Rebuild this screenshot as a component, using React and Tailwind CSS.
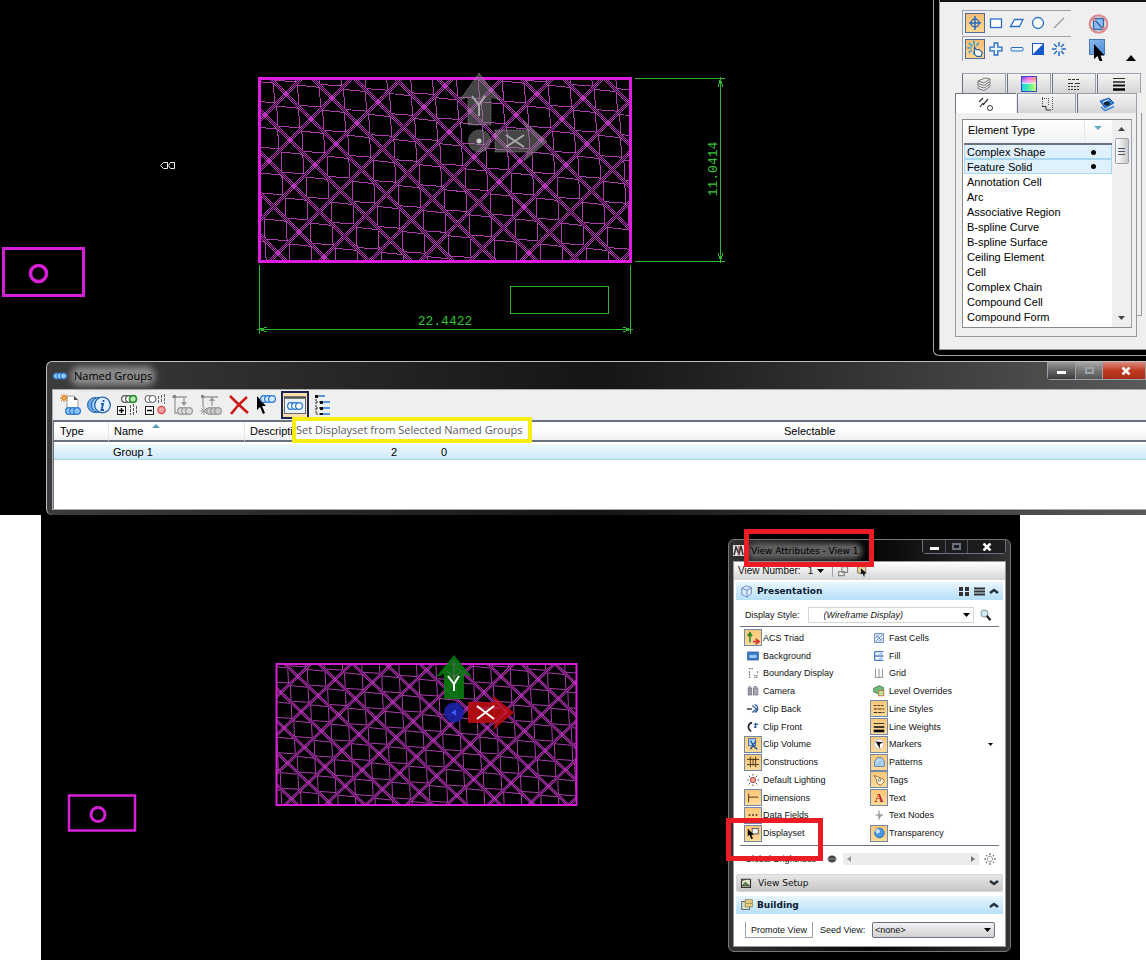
import React from "react";

const ELEMENTS = [
  "Complex Shape", "Feature Solid", "Annotation Cell", "Arc", "Associative Region", "B-spline Curve",
  "B-spline Surface", "Ceiling Element", "Cell", "Complex Chain", "Compound Cell", "Compound Form",
];

// Hatch built on two families of diagonals, with a slightly turned square in every cell.
function hatchPaths() {
  const ux = 25.1, uy = 25.1, vx = -20.9, vy = 20.9;
  const ox = 27, oy = 16;
  let bands = "";
  let cores = "";
  let cells = "";
  for (let i = -14; i <= 14; i++) {
    const fall = Math.round(oy - ox + i * (vy - vx));
    const rise = Math.round(oy + ox + i * (uy + ux));
    for (const d of [-2, 0, 2]) {
      const pair = `M-20 ${fall + d - 20}L400 ${fall + d + 400}M-20 ${rise + d + 20}L400 ${rise + d - 400}`;
      if (d === 0) cores += pair;
      bands += pair;
    }
  }
  for (let i = -20; i <= 20; i++) {
    for (let j = -20; j <= 20; j++) {
      const cx = ox + (i + 0.5) * ux + (j + 0.5) * vx;
      const cy = oy + (i + 0.5) * uy + (j + 0.5) * vy;
      if (cx < -20 || cx > 392 || cy < -20 || cy > 204) continue;
      cells += `M${cx - 11.3} ${cy - 11}L${cx + 10.5} ${cy - 8.7}L${cx + 11.5} ${cy + 10.8}L${cx - 10.5} ${cy + 9.2}Z`;
    }
  }
  return { bands, cores, cells };
}
const HATCH = hatchPaths();

function Hatch({ x, y, w, h }) {
  return (
    <svg x={x} y={y} width={w} height={h} viewBox="0 0 372 183" preserveAspectRatio="none">
      <g fill="none" shapeRendering="crispEdges">
        <path d={HATCH.cells} stroke="#ac3cae" vectorEffect="non-scaling-stroke" />
        <path d={HATCH.cores} stroke="#000" strokeWidth="4" />
        <path d={HATCH.bands} stroke="#bd34bf" vectorEffect="non-scaling-stroke" />
      </g>
    </svg>
  );
}

function UpperDrawing() {
  return (
    <svg className="block h-[361px] w-[933px]" viewBox="0 0 933 361" role="img" aria-label="Upper view">
      <path d="M167.500 162.500h-4l-3 3l3 3h4zM168.500 165.500l2-3h4v6h-4z" fill="none" stroke="#f0f0f0" />
      <rect x="3.500" y="248.500" width="80" height="47" fill="none" stroke="#d61fd6" strokeWidth="3" />
      <circle cx="38.500" cy="273.500" r="8" fill="none" stroke="#d61fd6" strokeWidth="3.500" />
      <Hatch x={259} y={78} w={372} h={183} />
      <rect x="259.500" y="78.500" width="371" height="183" fill="none" stroke="#e01ce0" strokeWidth="3" />
      <g fill="#888" fillOpacity="0.5" stroke="#999" strokeOpacity="0.6" strokeDasharray="2 1">
        <path d="M479 73L500 100L491 97V125H468V97L460 100Z" />
        <path d="M495 130H528L523 121L547 141.500L524 161L528 152H495Z" />
        <circle cx="479.500" cy="141" r="11" />
      </g>
      <path d="M472 96l7 9l6-9M479 105v11M506 135l18 12M524 135l-18 12" fill="none" stroke="#a8a8a8" strokeWidth="2" />
      <circle cx="479" cy="141" r="2.500" fill="#ccc" />
      <g fill="none" stroke="#2fb52f" shapeRendering="crispEdges">
        <path d="M635 78.500h90M635 261.500h90M720.500 79v182M259.500 265v69M630.500 265v69M259 329.500h372" />
        <path d="M718 87l2.500-8l2.500 8M718 253l2.500 8l2.500-8M267 327l-8 2.500l8 2.500M623 327l8 2.500l-8 2.500" />
        <rect x="510.500" y="286.500" width="98" height="27" />
      </g>
      <g fill="#35c435" fontFamily="'Liberation Mono', monospace" fontSize="13" textAnchor="middle">
        <text x="445" y="325">22.4422</text>
        <text x="717" y="169" transform="rotate(-90 717 169)">11.0414</text>
      </g>
    </svg>
  );
}

function LowerDrawing() {
  return (
    <svg className="block h-[445px] w-[687px]" viewBox="41 515 687 445" role="img" aria-label="Lower view">
      <rect x="69" y="795.500" width="66" height="35" fill="none" stroke="#d61fd6" strokeWidth="2.500" />
      <circle cx="98" cy="814.500" r="7" fill="none" stroke="#d61fd6" strokeWidth="3" />
      <Hatch x={276} y={664} w={301} h={141} />
      <rect x="276.500" y="664" width="300" height="141" fill="none" stroke="#d61fd6" strokeWidth="2" />
      <path d="M454 655L472 677L464 674V699H444V674L436 677Z" fill="#087a10" fillOpacity="0.9" />
      <path d="M468 702H495L492 695L514 712.500L493 730L495 723H468Z" fill="#b80c10" fillOpacity="0.92" />
      <circle cx="454" cy="712.500" r="10" fill="#1c22a8" fillOpacity="0.9" />
      <path d="M451 712.500l5-3v6z" fill="#3b5bff" />
      <path d="M454 660v20M447 671l7 6l7-6M476 708h24M495 700l12 12l-12 11" fill="none" stroke="#cc55bb" strokeOpacity="0.5" />
      <path d="M448 676l6 8l5-8M454 684v7M477 706l17 13M494 706l-17 13" fill="none" stroke="#fff" strokeWidth="2" />
    </svg>
  );
}

/* ---------- palette icons ---------- */
const Svg = ({ s = 16, children, ...p }) => (
  <svg width={s} height={s} viewBox="0 0 16 16" fill="none" aria-hidden="true" className="shrink-0" {...p}>{children}</svg>
);
const B = "#2a6fc4";

const METHODS = [
  ["Individual", <Svg><circle cx="8" cy="8" r="4" stroke={B} strokeWidth="1.500" /><path d="M8 1v14M2 8h12" stroke={B} strokeWidth="1.500" /></Svg>, true],
  ["Block", <Svg><rect x="2.500" y="4" width="11" height="8.500" fill="#fff" stroke={B} strokeWidth="1.300" /></Svg>],
  ["Shape", <Svg><path d="M5.500 4.500H14L10.500 11.500H1.500Z" fill="#fff" stroke={B} strokeWidth="1.300" /></Svg>],
  ["Circle", <Svg><circle cx="8" cy="8" r="5.500" fill="#fff" stroke={B} strokeWidth="1.300" /></Svg>],
  ["Line", <Svg><path d="M3 13L13 3" stroke="#999" strokeWidth="1.300" /></Svg>],
];
const MODES = [
  ["New", <Svg s={18}><path d="M7 0.500v4M1 7h4M2.500 2.500l3.200 3.200M11.500 2.500L9 5M2.500 11.500L5 9M7 10v3" stroke="#4fa3c4" strokeWidth="1.500" /><path d="M7.500 6v6.500l2 2h4l1-3.500l-3-2.500l-2.500 0z" fill="#fff" stroke="#2c62a0" /></Svg>, true],
  ["Add", <Svg><path d="M6.200 2h3.600v4.200H14v3.600H9.800V14H6.200V9.800H2V6.200h4.200z" fill="#e8f4ff" stroke={B} strokeWidth="1.300" /></Svg>],
  ["Subtract", <Svg><rect x="2" y="6.500" width="12" height="3.500" rx="1" fill="#e8f4ff" stroke={B} /></Svg>],
  ["Invert", <Svg><rect x="2.500" y="2.500" width="11" height="11" fill="#fff" stroke="#1558c8" /><path d="M13.500 2.500v11h-11z" fill="#1558c8" /></Svg>],
  ["Select all", <Svg><path d="M8 1v4.500M8 10.500V15M1 8h4.500M10.500 8H15M3 3l3 3M10 10l3 3M3 13l3-3M10 6l3-3" stroke={B} strokeWidth="1.500" /></Svg>],
];

function ToolStrip({ items, label }) {
  return (
    <div role="toolbar" aria-label={label} className="flex h-[25px] w-[109px] items-center gap-px border-t border-l border-t-gray-400 border-l-gray-400 pl-[2px]">
      {items.map(([name, icon, on]) => (
        <button key={name} aria-label={name} aria-pressed={!!on}
          className={"grid h-5 w-5 place-items-center border " + (on ? "border-[#506a96] bg-linear-to-b from-[#f6bd72] to-[#fdd794]" : "border-transparent")}>
          {icon}
        </button>
      ))}
    </div>
  );
}

const tabClass = "grid place-items-center border-t border-l border-r border-gray-400 border-l-gray-500 bg-linear-to-b from-[#f4f4f4] to-[#d6d6d6]";

function Palette() {
  return (
    <aside aria-label="Element Selection" className="absolute top-0 right-0 h-[356px] w-[213px] rounded-bl-md border-b border-l border-[#a5a5a5] bg-black pb-[5px] pl-[5px]">
      <div className="h-full border-b border-l border-[#999] bg-[#efefef] pl-[15px] shadow-[inset_0_2px_0_#111]">
        <div className="flex pt-[10px] pl-[7px]">
          <div className="flex flex-col gap-px">
            <ToolStrip items={METHODS} label="Method" />
            <ToolStrip items={MODES} label="Mode" />
          </div>
          <div className="flex flex-col pl-[17px]">
            <button aria-label="Disable handles" className="h-[27px]">
              <svg width="21" height="22" viewBox="0 0 21 22" fill="none"><rect x="5.500" y="5.500" width="10" height="11" fill="#8dbcf0" stroke="#3568a8" strokeWidth="1.500" /><path d="M6 6l9 10" stroke="#3568a8" strokeWidth="1.500" /><circle cx="10.500" cy="11" r="8.700" stroke="#d98a8d" strokeWidth="2.300" /><path d="M4.500 5l3 3M14 14.500l2.500 2.500" stroke="#d98a8d" strokeWidth="2.300" /></svg>
            </button>
            <button aria-label="Select element" className="h-6">
              <svg width="21" height="24" viewBox="0 0 21 24"><defs><linearGradient id="sel" x2="1" y2="1"><stop stopColor="#8ebdf0" /><stop offset="1" stopColor="#4b8ddd" /></linearGradient></defs><rect x="1.500" y="2.500" width="15" height="15" fill="url(#sel)" stroke="#4678b4" /><path d="M6 7v15l3.500-3l2 5h3l-2-5.500h4z" fill="#000" /></svg>
            </button>
          </div>
          <button aria-label="Collapse" className="mt-11 ml-[17px] h-2">
            <svg width="10" height="6" viewBox="0 0 10 6"><path d="M5 0l5 6H0z" /></svg>
          </button>
        </div>
        <div className="mt-[11px] flex h-5 gap-px pl-[7px]">
          <button aria-label="Level" className={tabClass + " w-11"}>
            <Svg><path d="M2 5l7-3l5 1l-6 4zM2 5v2.500l6 2l6-4V3M2 8v2l6 2l6-4V6M2 11v1.500l6 2l6-4V9" fill="#eee" stroke="#777" /></Svg>
          </button>
          <button aria-label="Color" className={tabClass + " w-11"}>
            <svg width="16" height="16" viewBox="0 0 16 16">
              <defs>
                <linearGradient id="hue"><stop stopColor="#7a4de8" /><stop offset="0.500" stopColor="#ff70e0" /><stop offset="1" stopColor="#ff9a60" /></linearGradient>
                <linearGradient id="hue2"><stop stopColor="#20c8ff" /><stop offset="0.500" stopColor="#50f0a0" /><stop offset="1" stopColor="#e8ff70" /></linearGradient>
                <linearGradient id="fade" x2="0" y2="1"><stop stopColor="#fff" stopOpacity="0" /><stop offset="1" stopColor="#fff" stopOpacity="0.700" /></linearGradient>
              </defs>
              <rect width="16" height="8" fill="url(#hue)" /><rect y="7" width="16" height="9" fill="url(#hue2)" /><rect y="2" width="16" height="6" fill="url(#fade)" />
              <rect x="0.500" y="0.500" width="15" height="15" fill="none" stroke="#3a4ac0" />
            </svg>
          </button>
          <button aria-label="Style" className={tabClass + " w-11"}>
            <Svg><path d="M2 3.500h12" stroke="#333" strokeDasharray="3 1" /><path d="M2 7.500h12" stroke="#333" strokeDasharray="5 2" /><path d="M2 10.500h12M2 13.500h12" stroke="#333" strokeDasharray="2 1" /></Svg>
          </button>
          <button aria-label="Weight" className={tabClass + " w-11"}>
            <Svg><path d="M2 2.500h12" stroke="#333" /><path d="M2 6h12" stroke="#222" strokeWidth="1.500" /><path d="M2 9.500h12" stroke="#111" strokeWidth="2" /><path d="M2 13.500h12" stroke="#000" strokeWidth="2.500" /></Svg>
          </button>
        </div>
        <div className="flex h-5 gap-px">
          <button aria-label="Type" className="grid w-[61px] place-items-center border-t border-l border-gray-500 bg-white">
            <Svg><path d="M1 6l4-4M5 9l5-6M2 11l3-4" stroke="#333" strokeWidth="1.200" /><circle cx="12" cy="12" r="2.500" stroke="#333" /></Svg>
          </button>
          <button aria-label="Class" className={tabClass + " w-[59px]"}>
            <Svg><path d="M3.500 1v10M13.500 1v14M3 2.500h6M9.500 2v8" stroke="#555" strokeDasharray="1 1" /><path d="M3 10.500h4v3.500h5" stroke="#333" /></Svg>
          </button>
          <button aria-label="Template" className={tabClass + " w-[60px]"}>
            <Svg><path d="M1 5l9-3l5 5l-9 5z" fill="#3a86dd" stroke="#1c5cae" /><path d="M2 11l4 3.500l9-4" stroke="#3a86dd" strokeWidth="1.500" /><ellipse cx="8" cy="7.500" rx="3" ry="2" fill="#123" /><path d="M4 6l6-2.500" stroke="#cfe6ff" /></Svg>
          </button>
        </div>
        <div className="flex">
          <div className="h-[224px] w-[182px] border-r border-b border-l border-[#999] px-[6px] pt-[6px]">
            <div className="flex h-[209px] w-[170px] border border-[#8a8a8a] border-r-gray-400 bg-white pl-px">
              <table className="h-fit w-[148px] table-fixed border-collapse text-[11px] leading-[14px]">
                <thead>
                  <tr className="h-6 border-b-2 border-gray-500">
                    <th className="border-r border-gray-200 bg-linear-to-b from-white to-[#f1f2f4] pt-0 pb-1 pl-1 text-left font-normal">Element Type</th>
                    <th aria-label="Selected" className="w-7 bg-linear-to-b from-white to-[#f1f2f4]">
                      <svg className="mx-auto mb-2" width="8" height="4" viewBox="0 0 8 4"><path d="M0 0h8L4 4z" fill="#60a8c8" /></svg>
                    </th>
                  </tr>
                </thead>
                <tbody>
                  {ELEMENTS.map((name, i) => (
                    <tr key={name} className={"h-[15px] " + (i < 2 ? "bg-[#dff1fc] shadow-[inset_0_0_0_1px_#a7d8f0]" : "")}>
                      <td className="p-0 pl-[3px] whitespace-nowrap">{name}</td>
                      <td className="p-0">{i < 2 && <span className="ml-[7px] block h-[5px] w-[5px] rounded-full bg-black" />}</td>
                    </tr>
                  ))}
                </tbody>
              </table>
              <div className="flex flex-1 flex-col items-center bg-[#efefef]">
                <button aria-label="Scroll up" className="grid h-[18px] w-full place-items-center"><svg width="7" height="4" viewBox="0 0 7 4"><path d="M0 4h7L3.500 0z" fill="#444" /></svg></button>
                <div className="grid h-[26px] w-[14px] content-center justify-center gap-[2px] rounded-xs border border-gray-400 bg-linear-to-r from-white to-[#c9c9c9]">
                  <i className="h-px w-[7px] bg-gray-600" /><i className="h-px w-[7px] bg-gray-600" /><i className="h-px w-[7px] bg-gray-600" />
                </div>
                <button aria-label="Scroll down" className="mt-auto grid h-[18px] w-full place-items-center"><svg width="7" height="4" viewBox="0 0 7 4"><path d="M0 0h7L3.500 4z" fill="#444" /></svg></button>
              </div>
            </div>
          </div>
          <div className="h-[203px] w-[5px] border-r border-b border-[#999]" />
        </div>
      </div>
    </aside>
  );
}

/* ---------- Named Groups ---------- */
const Rings = ({ x = 0, y = 0, c = "#2a78cf", f = "#d5eaff", last }) => (
  <g transform={`translate(${x} ${y})`} stroke={c} fill={f} strokeWidth="1.200">
    <circle cx="4" cy="4" r="3.400" /><circle cx="8" cy="4" r="3.400" /><circle cx="12" cy="4" r="3.400" fill={last || f} />
  </g>
);
const Tool = ({ children }) => <svg width="24" height="24" viewBox="0 0 24 24" fill="none" aria-hidden="true">{children}</svg>;

const TOOLS = [
  ["New Named Group", <Tool><path d="M8 3h7l4 4v14H8z" fill="#fff" stroke="#999" /><path d="M15 3v4h4z" fill="#555" /><path d="M5 1v8M1 5h8M2 2l6 6M8 2L2 8" stroke="#e06a20" /><circle cx="5" cy="5" r="2" fill="#ffd34a" stroke="#e06a20" /><Rings x={6} y={14} f="#8fc4f8" /></Tool>],
  ["Properties", <Tool><circle cx="8" cy="12" r="7.500" fill="#6aa5e6" stroke="#2565b0" /><circle cx="12" cy="12" r="7.500" fill="#a8cdf5" stroke="#2565b0" /><circle cx="15.500" cy="12" r="7.800" fill="#e3f1ff" stroke="#2565b0" strokeWidth="1.300" /><path d="M16.500 7v2M14 11h2l-1.500 6h2.500" stroke="#2055b8" strokeWidth="1.800" /></Tool>],
  ["Add to Group", <Tool><Rings x={6} y={2} c="#555" f="#fff" last="#b6ecb0" /><circle cx="18" cy="6" r="3.600" stroke="#209a30" strokeWidth="1.500" /><rect x="2.500" y="13.500" width="8" height="8" fill="#fff" stroke="#222" /><path d="M4 17.500h5M6.500 15v5" stroke="#000" strokeWidth="1.500" /><path d="M15.500 12v10M18.500 11v11M21.500 13v8" stroke="#555" strokeDasharray="3 1" /></Tool>],
  ["Remove from Group", <Tool><circle cx="5.500" cy="6" r="3.500" fill="#fff" stroke="#555" /><circle cx="9.500" cy="6" r="3.500" fill="#fff" stroke="#555" /><path d="M15.500 3v8M18.500 2v8M21.500 1v10" stroke="#666" strokeDasharray="3 1" /><rect x="2.500" y="13.500" width="8" height="8" fill="#fff" stroke="#222" /><path d="M4 17.500h5" stroke="#000" strokeWidth="1.500" /><circle cx="18.500" cy="17" r="3.600" fill="#f4a2a2" stroke="#d8434a" strokeWidth="1.300" /></Tool>],
  ["Add Dependents", <Tool><path d="M1 4h15M4 2v18h3M13 5v7" stroke="#999" strokeWidth="1.300" /><path d="M10 9l3 4l3-4" fill="#999" /><rect x="2" y="2" width="3" height="3" fill="#888" /><Rings x={6} y={14} c="#999" f="#ddd" /></Tool>],
  ["Remove Dependents", <Tool><path d="M3 4h16M4 2v12M13 6v7" stroke="#999" strokeWidth="1.300" /><path d="M10 8l3-4l3 4" fill="#999" /><rect x="2" y="2" width="3" height="3" fill="#888" /><path d="M5 14v8M1 18h8M2 15l6 6M8 15l-6 6" stroke="#999" /><Rings x={7} y={14} c="#999" f="#ccc" /></Tool>],
  ["Delete", <Tool><path d="M3 3c5 5 11 11 18 17M20 4C14 9 9 14 4 21" stroke="#cc1818" strokeWidth="2.500" /></Tool>],
  ["Select Elements", <Tool><path d="M2 3v14l3-3l3 7l2-1l-3-7h4z" fill="#000" /><Rings x={5} y={2} /></Tool>],
  ["Displayset", <Tool><rect x="1.500" y="4.500" width="21" height="16" fill="#e8f2fc" stroke="#667" /><path d="M1 4.500h22" stroke="#555" strokeWidth="2.500" /><Rings x={4} y={9} f="#fff" /></Tool>, true],
  ["Hierarchy", <Tool><path d="M5 3v18M5 9h6M5 15h6M5 21h6M9 3h-4" stroke="#222" strokeDasharray="2 1" /><path d="M9 3h5M12 9h7M12 15h7M12 21h7" stroke="#2a78cf" strokeWidth="1.400" /><path d="M4 2h3v3H4zM9 8h3v3H9zM9 14h3v3H9zM9 20h3v2H9z" fill="#111" /></Tool>],
];

function WindowButtons({ small }) {
  return (
    <div className={"flex border-r border-b border-l border-gray-400 " + (small ? "h-[14px] w-[84px] rounded-b-sm border-gray-500" : "h-[18px] w-[99px] rounded-bl-sm")}>
      <button aria-label="Minimize" className={"grid place-items-center border-r " + (small ? "w-[23px] border-gray-600 bg-[#1c1c1c]" : "w-7 border-gray-400 bg-linear-to-b from-[#9a9a9a] via-[#666] to-[#3c3c3c]")}>
        <i className="mt-1 h-[3px] w-[9px] bg-white" />
      </button>
      <button aria-label="Maximize" className={"grid place-items-center border-r " + (small ? "w-[22px] border-gray-600 bg-[#1c1c1c]" : "w-[27px] border-gray-400 bg-linear-to-b from-[#aaa] via-[#777] to-[#555]")}>
        <i className={"h-[7px] w-[9px] border-2 " + (small ? "border-gray-500" : "border-gray-400")} />
      </button>
      <button aria-label="Close" className={"grid flex-1 place-items-center " + (small ? "bg-[#1c1c1c]" : "bg-linear-to-b from-[#d98a7c] via-[#c03a22] to-[#a82c14] pl-1")}>
        <svg width="10" height="8" viewBox="0 0 10 8"><path d="M1.500 0.500l7 7M8.500 0.500l-7 7" stroke="#fff" strokeWidth="2.500" /></svg>
      </button>
    </div>
  );
}

function NamedGroups() {
  const th = "h-5 border-r border-gray-200 bg-linear-to-b from-white from-40% to-[#eff0f2] p-0 text-left font-normal border-b-2 border-b-gray-500";
  const td = "h-[18px] border-t-2 border-b border-t-white border-b-[#a7d4ea] bg-linear-to-b from-[#eef8fe] to-[#cfeafa] p-0";
  return (
    <section aria-label="Named Groups" className="relative min-w-0 flex-1 rounded-l-md border-t border-l border-[#bdbdbd] bg-[#1b1b1b] bg-linear-to-r from-[#3c3c3c] via-[#151515] to-[#5a5a5a] pb-[5px] pl-[5px]">
      <header className="flex h-[27px] justify-between">
        <div className="flex items-center font-['Open_Sans',sans-serif] text-[11px]">
          <svg width="14" height="8" viewBox="0 0 16 8" className="ml-px"><Rings c="#2a78cf" f="#8ec8ff" /></svg>
          <h1 className="ml-[7px] rounded-md bg-[#868686] leading-3 text-black shadow-[0_0_6px_4px_#868686]">Named Groups</h1>
        </div>
        <WindowButtons />
      </header>
      <div className="border-t border-b border-l border-[#aaa] bg-[#efefef]">
        <div role="toolbar" aria-label="Named group tools" className="flex h-[30px] items-center pl-1">
          {TOOLS.map(([name, icon, on]) => (
            <button key={name} aria-label={name} className={"grid h-7 w-7 place-items-center border " + (on ? "border-2 border-[#1c2450] bg-[#fbdfae]" : "border-transparent")}>{icon}</button>
          ))}
        </div>
        <div className="h-[89px] border-t-2 border-l border-gray-500 bg-white">
          <table className="w-full table-fixed border-separate border-spacing-0 text-[11px] leading-[14px]">
            <colgroup><col className="w-[55px]" /><col className="w-[136px]" /><col className="w-[99px]" /><col className="w-[57px]" /><col className="w-[378px]" /><col /></colgroup>
            <thead>
              <tr>
                <th className={th + " pl-[6px]"}>Type</th>
                <th className={th + " pl-[5px]"}><span className="flex">Name<svg className="ml-[9px]" width="8" height="4" viewBox="0 0 8 4"><path d="M0 4h8L4 0z" fill="#5c9cba" /></svg></span></th>
                <th className={th + " border-r-0 pl-[5px]"}>Description</th>
                <th className={th + " border-r-0"} /><th className={th + " border-r-0"} />
                <th className={th + " border-r-0 pl-[5px]"}>Selectable</th>
              </tr>
            </thead>
            <tbody>
              <tr>
                <td className={td} /><td className={td + " pl-1"}>Group 1</td><td className={td} /><td className={td + " pr-1 text-right"}>2</td><td className={td + " pl-10"}>0</td><td className={td} />
              </tr>
            </tbody>
          </table>
        </div>
      </div>
      <div role="tooltip" className="absolute top-[55px] left-[245px] flex h-[26px] w-[240px] items-center border-4 border-[#f7ec13] bg-white font-['Open_Sans',sans-serif] text-[11px] whitespace-nowrap text-[#5a5a5a]">
        Set Displayset from Selected Named Groups
      </div>
    </section>
  );
}

/* ---------- View Attributes ---------- */
const O = "#3b2a10";
const LEFT = [
  ["ACS Triad", 1, <><path d="M4.500 13V4M2 6l2.500-4L7 6" stroke="#2a8a2a" strokeWidth="1.800" /><path d="M8 12h5M11 9l4 3l-4 3" stroke="#d02020" strokeWidth="1.500" /></>],
  ["Background", 0, <><rect x="2" y="3.500" width="12" height="9" fill="#3d7fd0" stroke="#245090" /><rect x="4" y="7" width="8" height="3" fill="#a9d0f5" /></>],
  ["Boundary Display", 0, <path d="M3 3h5M4 6v7h2M9 11h4v2H9M13 6v2" stroke="#555" strokeDasharray="2 1" />],
  ["Camera", 0, <><rect x="2.500" y="4.500" width="4" height="8" fill="#99a" stroke="#778" /><rect x="8.500" y="4.500" width="5" height="8" fill="#aab" stroke="#778" /><path d="M3 3h2M9 3h3" stroke="#558" /></>],
  ["Clip Back", 0, <><path d="M1 8h6" stroke="#223" strokeWidth="1.500" /><path d="M7 4l5 4l-5 4M10 3c4 1 5 7 0 9" stroke="#35629c" strokeWidth="1.500" /></>],
  ["Clip Front", 0, <><path d="M7 3C2 4 1 10 6 13" stroke="#223" strokeWidth="1.800" /><path d="M9 5h5M9 8h3M11 3v6" stroke="#35629c" strokeWidth="1.500" /></>],
  ["Clip Volume", 1, <><rect x="3" y="2" width="8" height="8" fill="#b9d8f8" stroke="#2c62a8" /><path d="M5 4l3 5l3-4M5 14l3-4l5 4" stroke="#1f4f90" strokeWidth="1.500" /></>],
  ["Constructions", 1, <path d="M1 5h14M1 11h14M5 2v12M11 2v12M8 4v8" stroke={O} />],
  ["Default Lighting", 0, <><circle cx="8" cy="8" r="3" fill="#f2a59a" stroke="#a33" /><path d="M8 1v2M8 13v2M1 8h2M13 8h2M3 3l2 2M11 11l2 2M3 13l2-2M11 5l2-2" stroke="#444" /></>],
  ["Dimensions", 1, <path d="M3 3v10M3 7h11" stroke={O} />],
  ["Data Fields", 1, <path d="M3 8h2M7 8h2M11 8h2" stroke={O} strokeWidth="1.500" />],
  ["Displayset", 1, <><rect x="7" y="3" width="7" height="6" fill="#fff" stroke="#444" /><path d="M2 3v9l2-2l2 5l2-1l-2-4h3z" fill="#000" /></>],
];
const RIGHT = [
  ["Fast Cells", 0, <><rect x="3" y="3" width="10" height="10" fill="#e5effb" stroke="#5a82b8" /><path d="M4 12l8-8M4 8l4-4M8 12l4-4M5 5l6 6" stroke="#5a82b8" /></>],
  ["Fill", 0, <><path d="M3 3h10M3 8h10M3 13h10M3 3v10" stroke="#4a7cc0" strokeWidth="1.500" /><path d="M4 7c3 0 3-2 8-3v3zM4 12c3 0 3-2 8-3v3z" fill="#a8cdf2" /></>],
  ["Grid", 0, <path d="M4 3v10M8 3v10M12 3v10M3 13h10" stroke="#888" />],
  ["Level Overrides", 0, <><path d="M2 5l6-3l5 2v4l-6 3l-5-2z" fill="#74bb80" stroke="#3a7a4a" /><rect x="7.500" y="7.500" width="6" height="6" fill="#b6e29c" stroke="#c07030" /></>],
  ["Line Styles", 1, <><path d="M2 4h12" stroke={O} strokeDasharray="3 1" /><path d="M2 8h12M2 12h12" stroke={O} strokeWidth="1.300" strokeDasharray="4 1" /></>],
  ["Line Weights", 1, <><path d="M2 4h12" stroke="#222" /><path d="M2 8h12" stroke="#222" strokeWidth="2" /><path d="M2 12.500h12" stroke="#000" strokeWidth="3" /></>],
  ["Markers", 1, <><circle cx="8" cy="8" r="5.500" fill="#fff" stroke="#bbb" /><path d="M4 5l9 1l-4 2v5z" fill="#111" /></>],
  ["Patterns", 1, <><path d="M3 13V7l3-4h5l3 4v6z" fill="#b9daf6" stroke="#4773a8" /><path d="M5 12l7-7M8 12l5-5" stroke="#7eaad6" /></>],
  ["Tags", 1, <><path d="M2 3l4 1l7 3l1 3l-4 4l-4-2l-1-5z" fill="#fff3d5" stroke="#8a6530" /><circle cx="8.500" cy="8" r="1.500" stroke="#777" /></>],
  ["Text", 1, <text x="8" y="13" textAnchor="middle" fontFamily="'Liberation Serif', serif" fontWeight="bold" fontSize="14" fill="#b8201c">A</text>],
  ["Text Nodes", 0, <path d="M8 3v10M4 8h8M8 11l4-4" stroke="#888" strokeWidth="1.300" />],
  ["Transparency", 1, <><circle cx="8.500" cy="8" r="5.500" fill="#4a97e6" stroke="#2b66a8" /><circle cx="6.500" cy="6" r="2.500" fill="#c9e6ff" /></>],
];

function AttrColumn({ items }) {
  return (
    <div className="grid h-[213px] grid-rows-12">
      {items.map(([name, on, icon]) => (
        <button key={name} aria-pressed={!!on} className="flex min-h-0 items-center gap-px text-left whitespace-nowrap">
          <span className={"grid h-[17px] w-[18px] shrink-0 place-items-center border " + (on ? "border-[#7488a8] bg-linear-to-b from-[#fbc777] to-[#fddb9b]" : "border-transparent")}><Svg s={14}>{icon}</Svg></span>
          <span>{name}</span>
          {name === "Markers" && <svg className="mr-[6px] ml-auto" width="5" height="3" viewBox="0 0 5 3"><path d="M0 0h5L2.500 3z" /></svg>}
        </button>
      ))}
    </div>
  );
}

const Chevron = ({ down }) => (
  <svg width="10" height="6" viewBox="0 0 10 6" fill="none" className="ml-auto" aria-hidden="true"><path d={down ? "M1 1l4 3l4-3" : "M1 5l4-3l4 3"} stroke="#26323f" strokeWidth="2.500" /></svg>
);
const Caret = () => <svg className="pointer-events-none absolute top-1/2 right-1 -mt-0.5" width="7" height="4" viewBox="0 0 7 4"><path d="M0 0h7L3.500 4z" /></svg>;

function ViewAttributes() {
  const bold = "flex h-[18px] w-full items-center bg-linear-to-b from-[#e9f6fe] to-[#b5e0f8] px-1 font-['DejaVu_Sans',sans-serif] text-[9px] font-bold text-[#0b1a33]";
  return (
    <section aria-label="View Attributes" className="absolute top-6 right-[9px] w-[283px] rounded-md border border-[#777] bg-linear-to-r from-[#333] via-[#060606] to-[#333] px-1 pb-1 text-[9px] leading-3 text-[#111]">
      <header className="flex h-[21px] justify-between">
        <div className="flex items-center">
          <svg width="11" height="11" viewBox="0 0 11 11" className="mr-[7px]"><rect width="11" height="11" fill="#ddd" /><path d="M1 10L3 2l3 7l2-8l2 9" fill="none" stroke="#333" strokeWidth="1.500" /><path d="M6 1v9" stroke="#a33" /></svg>
          <h2 className="rounded-md bg-[#5e5e5e] font-['DejaVu_Sans',sans-serif] text-[9px] leading-[10px] text-black shadow-[0_0_5px_3px_#5e5e5e]">View Attributes - View 1</h2>
        </div>
        <WindowButtons small />
      </header>
      <div className="border border-[#999] bg-white pb-[7px]">
        <div className="flex h-[18px] items-center bg-linear-to-b from-white to-[#d5d5d5] pl-1">
          <label htmlFor="view-number" className="text-[10px]">View Number:</label>
          <span className="relative ml-[7px] w-5">
            <select id="view-number" className="w-full appearance-none bg-transparent text-[10px]"><option>1</option></select>
            <Caret />
          </span>
          <i className="ml-1 h-3 w-px bg-gray-400" />
          <button aria-label="Open views" className="ml-1"><Svg s={13}><path d="M6 2h7v7H6zM2 8h7v5H2z" fill="#eee" stroke="#888" strokeWidth="1.500" /></Svg></button>
          <button aria-label="Apply to view" className="ml-[6px]"><Svg s={13}><path d="M2 2h10v8H2z" fill="#eed79b" stroke="#665" /><path d="M6 4v8l2-2l2 5l1-5h2z" fill="#111" /></Svg></button>
        </div>
        <div className="px-[2px]">
          <div className={bold + " mt-[2px]"}>
            <Svg s={14}><path d="M2 5l5-3l6 2v7l-5 4l-6-3z" fill="#dcebfb" stroke="#5b82c0" /><path d="M2 5l6 2l5-3M8 7v8" stroke="#5b82c0" /></Svg>
            <h3 className="ml-[3px]">Presentation</h3>
            <button aria-label="Icon view" className="ml-auto"><svg width="10" height="9" viewBox="0 0 10 9"><path d="M0 0h4v4H0zM6 0h4v4H6zM0 5h4v4H0zM6 5h4v4H6z" fill="#333" /></svg></button>
            <button aria-label="List view" className="mr-1 ml-[5px]"><svg width="11" height="9" viewBox="0 0 11 9"><path d="M0 1.500h11M0 4.500h11M0 7.500h11" stroke="#333" strokeWidth="2" /></svg></button>
            <span><Chevron /></span>
          </div>
          <div className="flex h-[26px] items-center pt-1 pl-[9px]">
            <label htmlFor="display-style">Display Style:</label>
            <span className="relative ml-2 w-[166px]">
              <select id="display-style" className="h-4 w-full appearance-none border border-gray-300 bg-white pl-[15px] italic"><option>(Wireframe Display)</option></select>
              <Caret />
            </span>
            <button aria-label="Search styles" className="ml-[6px]"><Svg s={12}><circle cx="6" cy="6" r="4.500" fill="#d5e8f5" stroke="#8aa" strokeWidth="1.500" /><path d="M9 9l5 6" stroke="#222" strokeWidth="3" /></Svg></button>
          </div>
          <div className="mx-1 grid grid-cols-[126px_1fr] border-t border-b border-gray-500 pt-[2px] pb-[3px] pl-1">
            <AttrColumn items={LEFT} />
            <AttrColumn items={RIGHT} />
          </div>
          <div className="mb-[2px] flex h-[26px] items-center pl-[9px]">
            <label htmlFor="brightness" className="w-[82px]">Global Brightness</label>
            <svg width="10" height="8" viewBox="0 0 10 8"><ellipse cx="5" cy="4" rx="4" ry="3.500" fill="#444" /><path d="M0 4h10" stroke="#888" /></svg>
            <div className="ml-[6px] flex h-3 w-[136px] items-center justify-between bg-[#ececec] px-1">
              <svg width="4" height="6" viewBox="0 0 4 6"><path d="M4 0v6L0 3z" fill="#999" /></svg>
              <input id="brightness" type="range" className="h-2 w-[110px] appearance-none bg-transparent opacity-0" />
              <svg width="4" height="6" viewBox="0 0 4 6"><path d="M0 0v6l4-3z" fill="#777" /></svg>
            </div>
            <Svg s={12} style={{ marginLeft: 5 }}><circle cx="8" cy="8" r="3.500" fill="#fff" stroke="#888" /><path d="M8 0v3M8 13v3M0 8h3M13 8h3M3 3l1 1M12 12l1 1M3 13l1-1M12 4l1-1" stroke="#555" strokeWidth="1.500" /></Svg>
          </div>
          <button className="flex h-[18px] w-full items-center rounded-xs border border-gray-300 bg-linear-to-b from-[#e8e8e8] to-[#c6c6c6] px-[3px] font-['DejaVu_Sans',sans-serif]">
            <Svg s={12}><path d="M2 3h12v11H2z" fill="#dfe6c8" stroke="#333" strokeWidth="1.500" /><path d="M3 12l4-5l6 5zM3 5l5-2" fill="#668a50" stroke="#333" /></Svg>
            <span className="ml-[6px]">View Setup</span>
            <Chevron down />
          </button>
          <button className={bold + " mt-1"}>
            <Svg s={14}><rect x="2" y="4" width="9" height="9" fill="#d6e8c0" stroke="#557" /><rect x="6" y="2" width="8" height="8" fill="#f3d27c" stroke="#886" /><path d="M6 6h8" stroke="#886" /></Svg>
            <span className="ml-[3px]">Building</span>
            <Chevron />
          </button>
          <div className="mt-[7px] flex h-[18px] items-center pl-[9px]">
            <button className="h-4 w-[68px] border-r border-b border-l border-gray-400 text-[9px] whitespace-nowrap">Promote View</button>
            <label htmlFor="seed-view" className="ml-[7px] w-[46px]">Seed View:</label>
            <span className="relative ml-[6px] w-[123px]">
              <select id="seed-view" className="h-4 w-full appearance-none rounded-xs border border-gray-500 bg-linear-to-b from-[#f2f2f2] to-[#d2d2d2] pl-[2px]"><option>&lt;none&gt;</option></select>
              <Caret />
            </span>
          </div>
        </div>
      </div>
      <div className="absolute -top-[11px] left-[15px] h-[38px] w-[130px] border-[5px] border-[#ec1c24]" />
      <div className="absolute top-[278px] -left-[3px] h-[43px] w-[97px] border-[5px] border-[#ec1c24]" />
    </section>
  );
}

export default function App() {
  return (
    <main className="min-h-screen bg-white font-['Liberation_Sans',Arial,sans-serif] text-black">
      <section className="relative overflow-hidden bg-black">
        <UpperDrawing />
        <Palette />
      </section>
      <div className="flex bg-black pl-[46px]">
        <NamedGroups />
      </div>
      <section className="relative mr-[126px] ml-[41px] bg-black">
        <LowerDrawing />
        <ViewAttributes />
      </section>
    </main>
  );
}
